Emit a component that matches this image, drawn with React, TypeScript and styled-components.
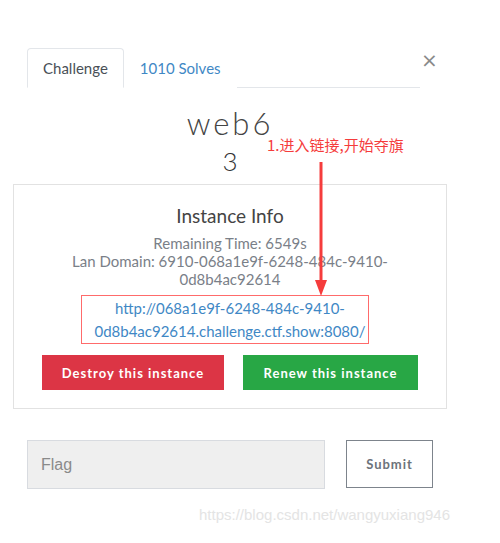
import React from "react";
import styled, { createGlobalStyle } from "styled-components";

const GlobalStyle = createGlobalStyle`
  html, body { margin: 0; padding: 0; background: #fff; }
  body { font-family: Lato, "Open Sans", "Liberation Sans", sans-serif; color: #212529; }
  * { box-sizing: border-box; }
`;

const Page = styled.div`
  position: relative;
  width: 500px;
  height: 543px;
  padding-top: 48px;
  overflow: hidden;
`;

const Header = styled.div`
  display: flex;
  align-items: flex-start;
  padding-left: 27px;
`;

const TabNav = styled.div`
  display: flex;
  width: 393px;
  border-bottom: 1px solid #e3e6ea;
`;

const Tab = styled.div<{ $active?: boolean }>`
  padding: 8px 15px;
  font-size: 15px;
  line-height: 22px;
  margin-bottom: -1px;
  border: 1px solid ${(p) => (p.$active ? "#e3e6ea" : "transparent")};
  border-bottom-color: ${(p) => (p.$active ? "#fff" : "transparent")};
  border-radius: 4px 4px 0 0;
  background: #fff;
  color: ${(p) => (p.$active ? "#495057" : "#3f88c5")};
`;

const Close = styled.div`
  margin-left: 1px;
  margin-top: 2px;
  font-family: "DejaVu Sans", sans-serif;
  font-size: 20px;
  line-height: 20px;
  color: #8a8a8a;
  width: 12px;
`;

const Content = styled.div`
  width: 434px;
  margin-left: 13px;
  display: flex;
  flex-direction: column;
  align-items: center;
`;

const Title = styled.div`
  margin-top: 17px;
  font-size: 31px;
  font-weight: 300;
  letter-spacing: 3px;
  line-height: 36px;
  color: #444;
`;

const Value = styled.div`
  margin-top: 5px;
  font-size: 26px;
  font-weight: 300;
  line-height: 30px;
  color: #333;
`;

const InstanceBox = styled.div`
  margin-top: 8px;
  width: 434px;
  border: 1px solid #e2e2e2;
  padding: 19px 0 18px;
  display: flex;
  flex-direction: column;
  align-items: center;
`;

const BoxTitle = styled.div`
  font-size: 19px;
  line-height: 24px;
  color: #444;
`;

const InfoText = styled.div`
  margin-top: 6px;
  width: 330px;
  text-align: center;
  font-size: 15px;
  line-height: 18px;
  color: #7a8088;
`;

const LinkBox = styled.div`
  margin-top: 7px;
  margin-right: 11px;
  width: 288px;
  height: 49px;
  border: 1px solid #ff6b6b;
  display: flex;
  align-items: center;
  justify-content: center;
`;

const Link = styled.a`
  display: block;
  width: 280px;
  margin-left: 11px;
  text-align: center;
  font-size: 15px;
  line-height: 23px;
  color: #3f88c5;
  text-decoration: none;
`;

const ButtonRow = styled.div`
  margin-top: 11px;
  display: flex;
  gap: 19px;
`;

const ActionButton = styled.button<{ $bg: string; $w: number }>`
  width: ${(p) => p.$w}px;
  height: 35px;
  border: none;
  border-radius: 0;
  background: ${(p) => p.$bg};
  color: #fff;
  font-family: Lato, sans-serif;
  font-weight: 700;
  font-size: 13px;
  letter-spacing: 1px;
  padding: 0;
`;

const FlagRow = styled.div`
  margin-top: 31px;
  margin-left: 27px;
  display: flex;
  align-items: flex-start;
  gap: 21px;
`;

const FlagInput = styled.input`
  width: 298px;
  height: 49px;
  background: #efefef;
  border: 1px solid #d8dbe0;
  padding: 0 13px;
  font-family: "Liberation Sans", Arial, sans-serif;
  font-size: 16px;
  color: #555;
  outline: none;
  &::placeholder { color: #8a8a8a; }
`;

const SubmitButton = styled.button`
  width: 87px;
  height: 48px;
  background: #fff;
  border: 1px solid #7d848c;
  color: #6c737b;
  font-family: Lato, sans-serif;
  font-weight: 700;
  font-size: 13px;
  letter-spacing: 1px;
`;

const Watermark = styled.div`
  margin-top: 17px;
  margin-left: 199px;
  font-family: "Liberation Sans", Arial, sans-serif;
  font-size: 15px;
  color: #e4e4e4;
`;

const Annotation = styled.div`
  position: absolute;
  left: 267px;
  top: 135px;
  font-family: "Noto Sans CJK SC", sans-serif;
  font-size: 15px;
  line-height: 20px;
  color: #f53c3c;
`;

const Arrow = styled.svg`
  position: absolute;
  left: 313px;
  top: 162px;
`;

export default function App() {
  return (
    <Page>
      <GlobalStyle />
      <Header>
        <TabNav>
          <Tab $active>Challenge</Tab>
          <Tab>1010 Solves</Tab>
        </TabNav>
        <Close>×</Close>
      </Header>
      <Content>
        <Title>web6</Title>
        <Value>3</Value>
        <InstanceBox>
          <BoxTitle>Instance Info</BoxTitle>
          <InfoText>
            Remaining Time: 6549s
            <br />
            Lan Domain: 6910-068a1e9f-6248-484c-9410-0d8b4ac92614
          </InfoText>
          <LinkBox>
            <Link href="#">http://068a1e9f-6248-484c-9410-0d8b4ac92614.challenge.ctf.show:8080/</Link>
          </LinkBox>
          <ButtonRow>
            <ActionButton $bg="#dc3545" $w={182}>Destroy this instance</ActionButton>
            <ActionButton $bg="#28a745" $w={175}>Renew this instance</ActionButton>
          </ButtonRow>
        </InstanceBox>
      </Content>
      <FlagRow>
        <FlagInput placeholder="Flag" />
        <SubmitButton>Submit</SubmitButton>
      </FlagRow>
      <Watermark>https://blog.csdn.net/wangyuxiang946</Watermark>
      <Annotation>1.进入链接,开始夺旗</Annotation>
      <Arrow width="16" height="140" viewBox="0 0 16 140">
        <line x1="8" y1="0" x2="8" y2="122" stroke="#f53c3c" strokeWidth="3" />
        <polygon points="2,118 14,118 8,134" fill="#f53c3c" />
      </Arrow>
    </Page>
  );
}
